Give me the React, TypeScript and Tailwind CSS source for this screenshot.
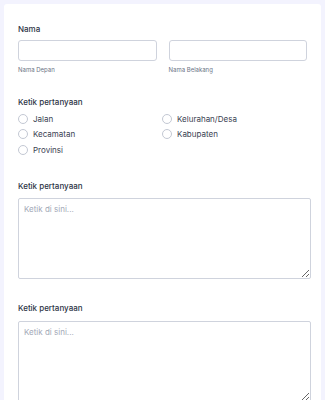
import React from "react";

const font = { fontFamily: "Inter, 'Noto Sans', sans-serif" };

function Radio({ label }: { label: string }) {
  return (
    <div className="flex items-center h-[15.5px] gap-[5px]">
      <span className="w-[10px] h-[10px] rounded-full border border-[#c3c8d3] bg-white shrink-0" />
      <span className="text-[8px] leading-[10px] text-[#3a4252]">{label}</span>
    </div>
  );
}

export default function App() {
  return (
    <div className="h-screen overflow-hidden bg-[#f3f3fe] pt-[4px] px-[4px]" style={font}>
      <div className="bg-white rounded-[3px] px-[14px] pt-[19px] pb-[40px]">
        <div className="text-[8px] leading-[12px] font-medium text-[#2c3345]">Nama</div>
        <div className="grid grid-cols-2 gap-[12px] w-[289px] mt-[5px]">
          <div className="flex flex-col">
            <div className="h-[21px] border border-[#cfd3dd] rounded-[3px] bg-white" />
            <div className="mt-[4px] text-[6px] leading-[10px] text-[#6b7385]">Nama Depan</div>
          </div>
          <div className="flex flex-col">
            <div className="h-[21px] border border-[#cfd3dd] rounded-[3px] bg-white" />
            <div className="mt-[4px] text-[6px] leading-[10px] text-[#6b7385]">Nama Belakang</div>
          </div>
        </div>

        <div className="mt-[21px] text-[8px] leading-[12px] font-medium text-[#2c3345]">Ketik pertanyaan</div>
        <div className="mt-[3px] grid grid-cols-[144px_1fr]">
          <Radio label="Jalan" />
          <Radio label="Kelurahan/Desa" />
          <Radio label="Kecamatan" />
          <Radio label="Kabupaten" />
          <Radio label="Provinsi" />
        </div>

        <div className="mt-[22px] text-[8px] leading-[12px] font-medium text-[#2c3345]">Ketik pertanyaan</div>
        <textarea
          className="mt-[6px] block w-[293px] h-[81px] border border-[#cfd3dd] rounded-[2px] px-[5px] py-[4px] text-[8px] leading-[12px] text-[#2c3345] placeholder:text-[#a3a9b7] outline-none"
          placeholder="Ketik di sini..."
          style={font}
        />

        <div className="mt-[23px] text-[8px] leading-[12px] font-medium text-[#2c3345]">Ketik pertanyaan</div>
        <textarea
          className="mt-[7px] block w-[293px] h-[81px] border border-[#cfd3dd] rounded-[2px] px-[5px] py-[4px] text-[8px] leading-[12px] text-[#2c3345] placeholder:text-[#a3a9b7] outline-none"
          placeholder="Ketik di sini..."
          style={font}
        />
      </div>
    </div>
  );
}
